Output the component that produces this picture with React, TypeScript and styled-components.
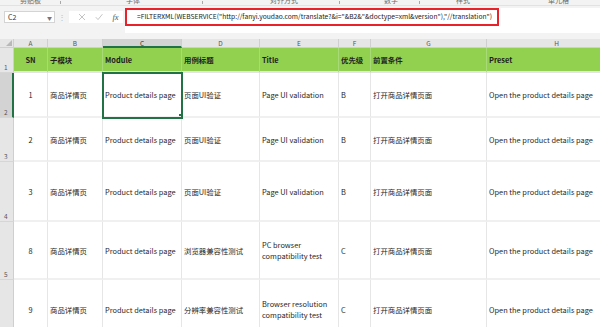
import React from "react"
import styled, { createGlobalStyle } from "styled-components"

const GlobalStyle = createGlobalStyle`
  *, *::before, *::after {
    box-sizing: border-box;
  }
  html, body {
    margin: 0;
    padding: 0;
    background: #ffffff;
    overflow: hidden;
  }
  body {
    font-family: "Noto Sans CJK SC", "Noto Sans", sans-serif;
  }
`

const FONT = `"Noto Sans CJK SC", "Noto Sans", sans-serif`

const columns = [
  { key: "A", width: 34, align: "center" },
  { key: "B", width: 55, align: "left" },
  { key: "C", width: 79, align: "left" },
  { key: "D", width: 78, align: "left" },
  { key: "E", width: 79, align: "left" },
  { key: "F", width: 32, align: "left" },
  { key: "G", width: 116, align: "left" },
  { key: "H", width: 140, align: "left" },
]

const headers = ["SN", "子模块", "Module", "用例标题", "Title", "优先级", "前置条件", "Preset"]

const rows = [
  { height: 45, cells: ["1", "商品详情页", "Product details page", "页面UI验证", "Page UI validation", "B", "打开商品详情页面", "Open the product details page"] },
  { height: 44, cells: ["2", "商品详情页", "Product details page", "页面UI验证", "Page UI validation", "B", "打开商品详情页面", "Open the product details page"] },
  { height: 60, cells: ["3", "商品详情页", "Product details page", "页面UI验证", "Page UI validation", "B", "打开商品详情页面", "Open the product details page"] },
  { height: 58, cells: ["8", "商品详情页", "Product details page", "浏览器兼容性测试", "PC browser compatibility test", "C", "打开商品详情页面", "Open the product details page"] },
  { height: 60, cells: ["9", "商品详情页", "Product details page", "分辨率兼容性测试", "Browser resolution compatibility test", "C", "打开商品详情页面", "Open the product details page"] },
]

// ribbon group captions, only their lower half is visible at the top edge
const ribbonGroups = [
  { label: "剪贴板", at: 20 },
  { label: "字体", at: 126 },
  { label: "对齐方式", at: 270 },
  { label: "数字", at: 384 },
  { label: "样式", at: 456 },
  { label: "单元格", at: 548 },
]

const launcherMarks = [60, 202, 339, 419]

const Page = styled.div`
  width: 600px;
  height: 327px;
  overflow: hidden;
  background: #ffffff;
  font-family: ${FONT};
`

const Ribbon = styled.div`
  position: relative;
  height: 6px;
  overflow: hidden;
  background: #f3f3f3;
  border-bottom: 1px solid #e2e2e2;
`

const RibbonLabel = styled.span<{ $at: number }>`
  position: absolute;
  left: ${(p) => p.$at}px;
  bottom: 0px;
  font-size: 7px;
  line-height: 9px;
  color: #6a6a6a;
`

const LauncherMark = styled.span<{ $at: number }>`
  position: absolute;
  left: ${(p) => p.$at}px;
  bottom: 1px;
  width: 1px;
  height: 3px;
  background: #a8a8a8;
`

const FormulaRow = styled.div`
  display: flex;
  align-items: flex-start;
  height: 27px;
  background: #f3f3f3;
`

const NameBox = styled.div`
  display: flex;
  align-items: center;
  justify-content: space-between;
  width: 51px;
  height: 12px;
  margin: 5px 0 0 4px;
  padding: 0 2px 0 3px;
  background: #ffffff;
  border: 1px solid #d4d4d4;
  font-size: 7px;
  color: #333333;
`

const Caret = styled.span`
  font-size: 5px;
  color: #777777;
`

const Dots = styled.span`
  width: 14px;
  margin-top: 5px;
  text-align: center;
  font-size: 8px;
  line-height: 12px;
  color: #b9b9b9;
`

const ActionBox = styled.div`
  display: flex;
  align-items: center;
  height: 12px;
  width: 54px;
  margin: 5px 2px 0 0;
  padding-left: 7px;
  gap: 6px;
  background: #ffffff;
`

const ActionIcon = styled.span<{ $dark?: boolean }>`
  display: flex;
  width: 11px;
  justify-content: center;
  color: ${(p) => (p.$dark ? "#555555" : "#b5b5b5")};
`

const FxText = styled.span`
  font-family: "Liberation Serif", serif;
  font-style: italic;
  font-size: 8.5px;
  color: #555555;
`

const FormulaInput = styled.div`
  flex: 1;
  height: 25px;
  margin-top: 2px;
  background: #ffffff;
`

const Highlight = styled.div`
  width: 374px;
  height: 18px;
  padding-left: 10px;
  border: 2.5px solid #e8212b;
  font-size: 6.7px;
  line-height: 13px;
  color: #222222;
  white-space: nowrap;
`

const Gap = styled.div`
  height: 6px;
  background: #f3f3f3;
`

const Sheet = styled.div`
  display: grid;
  grid-template-columns: 14px ${columns.map((c) => `${c.width}px`).join(" ")};
`

const Corner = styled.div`
  position: relative;
  height: 9px;
  background: #e6e6e6;
  border-right: 1px solid #cfcfcf;
  border-bottom: 1px solid #cfcfcf;

  &::after {
    content: "";
    position: absolute;
    right: 1px;
    bottom: 1px;
    border-left: 6px solid transparent;
    border-bottom: 6px solid #b8b8b8;
  }
`

const ColHead = styled.div<{ $selected?: boolean }>`
  height: 9px;
  display: flex;
  align-items: center;
  justify-content: center;
  font-size: 6.5px;
  color: ${(p) => (p.$selected ? "#2f2f2f" : "#555555")};
  background: ${(p) => (p.$selected ? "#d3d3d3" : "#e6e6e6")};
  border-right: 1px solid #cfcfcf;
  border-bottom: ${(p) => (p.$selected ? "2px solid #217346" : "1px solid #cfcfcf")};
`

const RowHead = styled.div<{ $h: number; $selected?: boolean }>`
  height: ${(p) => p.$h}px;
  display: flex;
  align-items: flex-end;
  padding: 0 0 1px 4px;
  font-size: 6.5px;
  line-height: 8px;
  color: #555555;
  background: ${(p) => (p.$selected ? "#d3d3d3" : "#e6e6e6")};
  border-right: ${(p) => (p.$selected ? "2px solid #217346" : "1px solid #cfcfcf")};
  border-bottom: 1px solid #d6d6d6;
`

const Cell = styled.div<{ $h: number; $align: string; $header?: boolean; $active?: boolean }>`
  position: relative;
  height: ${(p) => p.$h}px;
  display: flex;
  align-items: center;
  justify-content: ${(p) => (p.$align === "center" ? "center" : "flex-start")};
  padding: 0 2px;
  font-size: 7.4px;
  line-height: 11px;
  font-weight: ${(p) => (p.$header ? 700 : 400)};
  color: #1f1f1f;
  background: ${(p) => (p.$header ? "#92d050" : "#ffffff")};
  border-right: 1px solid ${(p) => (p.$header ? "#a8da78" : "#e6e6e6")};
  border-bottom: ${(p) => (p.$header ? "2px solid #e4e4e4" : "2px solid #f0f0f0")};
  outline: ${(p) => (p.$active ? "2px solid #217346" : "none")};
  outline-offset: -1px;
  z-index: ${(p) => (p.$active ? 1 : 0)};
  overflow: hidden;
`

const Handle = styled.span`
  position: absolute;
  right: -2px;
  bottom: -2px;
  width: 4px;
  height: 4px;
  background: #217346;
`

const CellText = styled.span`
  display: block;
`

const CloseIcon = () => (
  <svg width="8" height="8" viewBox="0 0 8 8">
    <path d="M1 1 L7 7 M7 1 L1 7" stroke="currentColor" strokeWidth="0.8" fill="none" />
  </svg>
)

const CheckIcon = () => (
  <svg width="8" height="8" viewBox="0 0 8 8">
    <path d="M0.8 4.2 L3 6.6 L7.4 1.2" stroke="currentColor" strokeWidth="0.8" fill="none" />
  </svg>
)

const App = () => {
  return (
    <Page>
      <GlobalStyle />
      <Ribbon>
        {ribbonGroups.map((g) => (
          <RibbonLabel key={g.label} $at={g.at}>{g.label}</RibbonLabel>
        ))}
        {launcherMarks.map((m) => (
          <LauncherMark key={m} $at={m} />
        ))}
      </Ribbon>
      <FormulaRow>
        <NameBox>
          <span>C2</span>
          <Caret>▼</Caret>
        </NameBox>
        <Dots>⋮</Dots>
        <ActionBox>
          <ActionIcon><CloseIcon /></ActionIcon>
          <ActionIcon><CheckIcon /></ActionIcon>
          <ActionIcon $dark><FxText>fx</FxText></ActionIcon>
        </ActionBox>
        <FormulaInput>
          <Highlight>
            =FILTERXML(WEBSERVICE("http://fanyi.youdao.com/translate?&amp;i="&amp;B2&amp;"&amp;doctype=xml&amp;version"),"//translation")
          </Highlight>
        </FormulaInput>
      </FormulaRow>
      <Gap />
      <Sheet>
        <Corner />
        {columns.map((c) => (
          <ColHead key={c.key} $selected={c.key === "C"}>{c.key}</ColHead>
        ))}
        <RowHead $h={25}>1</RowHead>
        {headers.map((h, i) => (
          <Cell key={h} $h={25} $align={columns[i].align} $header>
            <CellText>{h}</CellText>
          </Cell>
        ))}
        {rows.map((r, ri) => (
          <React.Fragment key={ri}>
            <RowHead $h={r.height} $selected={ri === 0}>{ri + 2}</RowHead>
            {r.cells.map((v, ci) => (
              <Cell key={ci} $h={r.height} $align={columns[ci].align} $active={ri === 0 && ci === 2}>
                <CellText>{v}</CellText>
                {ri === 0 && ci === 2 && <Handle />}
              </Cell>
            ))}
          </React.Fragment>
        ))}
      </Sheet>
    </Page>
  )
}

export default App
